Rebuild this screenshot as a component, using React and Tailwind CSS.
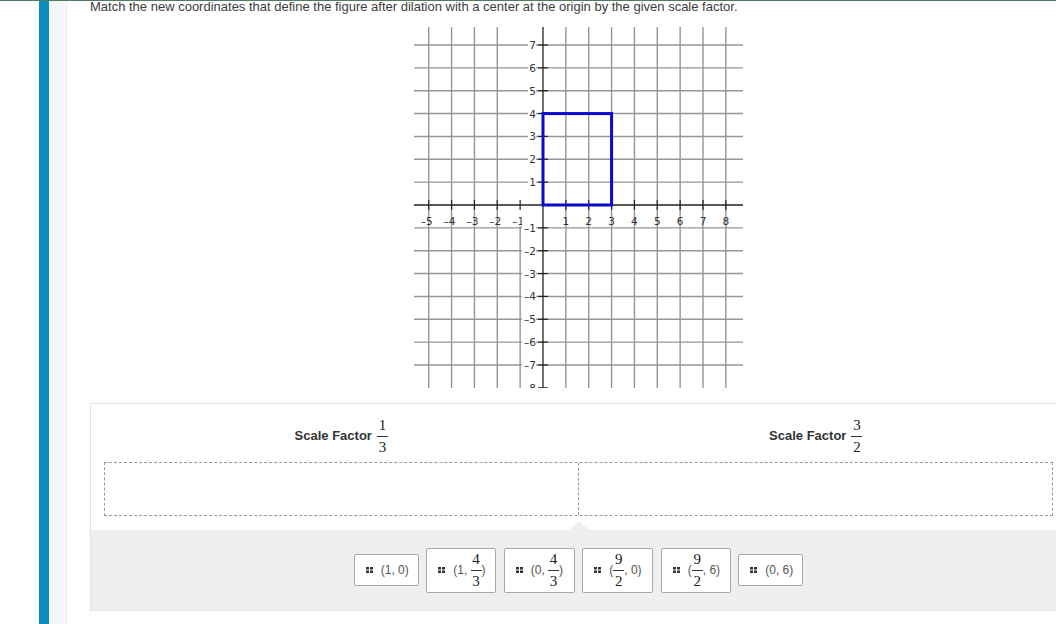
import React from 'react';

const U = 160 / 7;
const OX = 543;
const OY = 205;
const X = (v) => OX + v * U;
const Y = (v) => OY - v * U;

const xVals = [-5, -4, -3, -2, -1, 1, 2, 3, 4, 5, 6, 7, 8];
const yVals = [-8, -7, -6, -5, -4, -3, -2, -1, 1, 2, 3, 4, 5, 6, 7];

const lbl = (v) => (v < 0 ? '–' + Math.abs(v) : String(v));

function Graph() {
  const font = { fontFamily: '"DejaVu Sans", Verdana, sans-serif', fontSize: 10.5 };
  return (
    <svg width="329" height="366" viewBox="414 22 329 366">
      {/* grid */}
      {xVals.map((v) => (
        <line
          key={'vx' + v}
          x1={X(v)}
          x2={X(v)}
          y1={v === -1 ? 226 : 27}
          y2={388}
          stroke="#969696"
          strokeWidth="1.4"
        />
      ))}
      {yVals.filter((v) => v > -8).map((v) => (
        <line key={'hy' + v} x1={414} x2={743} y1={Y(v)} y2={Y(v)} stroke="#969696" strokeWidth="1.4" />
      ))}

      {/* axes */}
      <line x1={414} x2={743} y1={OY} y2={OY} stroke="#222" strokeWidth="1.3" />
      <line x1={OX} x2={OX} y1={27} y2={388} stroke="#222" strokeWidth="1.3" />

      {/* x ticks + labels */}
      {xVals.map((v) => (
        <g key={'xt' + v}>
          <line x1={X(v)} x2={X(v)} y1={OY - 5} y2={OY + 5} stroke="#222" strokeWidth="1.2" />
          <text x={X(v) - (v < 0 ? 2 : 0)} y={225} textAnchor="middle" fill="#333" style={font}>
            {lbl(v)}
          </text>
        </g>
      ))}

      {/* y ticks + labels */}
      {yVals.map((v) => {
        const w = v < 0 ? 14 : 8;
        const extra = v === -1 ? 5 : 0;
        return (
          <g key={'yt' + v}>
            <rect x={536 - w} y={Y(v) - 6 - extra} width={w} height={12 + extra} fill="#fff" />
            <text x={536} y={Y(v) + 4} textAnchor="end" fill="#333" style={font}>
              {lbl(v)}
            </text>
            <line x1={OX - 5} x2={OX + 5} y1={Y(v)} y2={Y(v)} stroke="#222" strokeWidth="1.2" />
          </g>
        );
      })}

      {/* figure */}
      <rect x={OX} y={Y(4)} width={3 * U} height={4 * U} fill="none" stroke="#0a0acc" strokeWidth="3" />
    </svg>
  );
}

function Frac({ n, d, size = 'text-[15px]' }) {
  return (
    <span className={`inline-flex flex-col items-center leading-none font-['Liberation_Serif',serif] text-[#222] ${size}`}>
      <span>{n}</span>
      <span className="h-px w-[11px] bg-[#333] my-[3px]" />
      <span>{d}</span>
    </span>
  );
}

function Grip() {
  return (
    <svg width="7" height="6" viewBox="0 0 7 6" className="shrink-0">
      <rect x="0" y="0" width="3" height="2.5" fill="#333" />
      <rect x="4" y="0" width="3" height="2.5" fill="#333" />
      <rect x="0" y="3.5" width="3" height="2.5" fill="#333" />
      <rect x="4" y="3.5" width="3" height="2.5" fill="#333" />
    </svg>
  );
}

function Chip({ tall, w, children }) {
  return (
    <div
      className={`flex items-center gap-[8px] bg-white border border-[#a9a9a9] rounded-[2px] pl-[11px] text-[12px] text-[#555] ${w} ${
        tall ? 'h-[45px]' : 'h-[32px]'
      }`}
    >
      <Grip />
      <span className="inline-flex items-center whitespace-pre">{children}</span>
    </div>
  );
}

function ScaleLabel({ n, d }) {
  return (
    <div className="flex items-center justify-center gap-[5px]">
      <span className="text-[13px] font-bold text-[#333]">Scale Factor</span>
      <Frac n={n} d={d} />
    </div>
  );
}

export default function App() {
  return (
    <div className="w-[1056px] h-[624px] overflow-hidden bg-white border-t border-[#4f7a5d] flex font-['Liberation_Sans',Arial,sans-serif]">
      <div className="w-[39px] shrink-0" />
      <div className="w-[10px] shrink-0 bg-[#0a8dba]" />
      <div className="w-[18px] shrink-0 bg-gradient-to-r from-[#f2f4f7] to-[#f7f8fa] border-r border-[#eceef1]" />

      <main className="w-[977px] shrink-0 ml-[23px]">
        <p className="text-[13px] leading-[12px] text-[#3d3d3d]">
          Match the new coordinates that define the figure after dilation with a center at the origin by the given scale factor.
        </p>

        <div className="flex justify-center mt-[9px]">
          <Graph />
        </div>

        <section className="mt-[15px] border border-[#e4e4e4]">
          <div className="grid grid-cols-2 h-[58px] px-[13px] pt-[6px] items-center">
            <ScaleLabel n="1" d="3" />
            <ScaleLabel n="3" d="2" />
          </div>

          <div className="mx-[13px] h-[54px] grid grid-cols-2 border border-dashed border-[#9a9a9a]">
            <div className="border-r border-dashed border-[#9a9a9a]" />
            <div />
          </div>

          <div className="mt-[5px] h-[9px] flex justify-center">
            <div className="w-0 h-0 border-l-[10px] border-r-[10px] border-b-[9px] border-l-transparent border-r-transparent border-b-[#efefef]" />
          </div>

          <div className="h-[80px] bg-[#efefef] flex items-center justify-center gap-[7.5px]">
            <Chip w="w-[65px]">(1, 0)</Chip>
            <Chip tall w="w-[70px]">
              (1, <Frac n="4" d="3" />)
            </Chip>
            <Chip tall w="w-[71px]">
              (0, <Frac n="4" d="3" />)
            </Chip>
            <Chip tall w="w-[71px]">
              (<Frac n="9" d="2" />, 0)
            </Chip>
            <Chip tall w="w-[70px]">
              (<Frac n="9" d="2" />, 6)
            </Chip>
            <Chip w="w-[65px]">(0, 6)</Chip>
          </div>
        </section>
      </main>
    </div>
  );
}
